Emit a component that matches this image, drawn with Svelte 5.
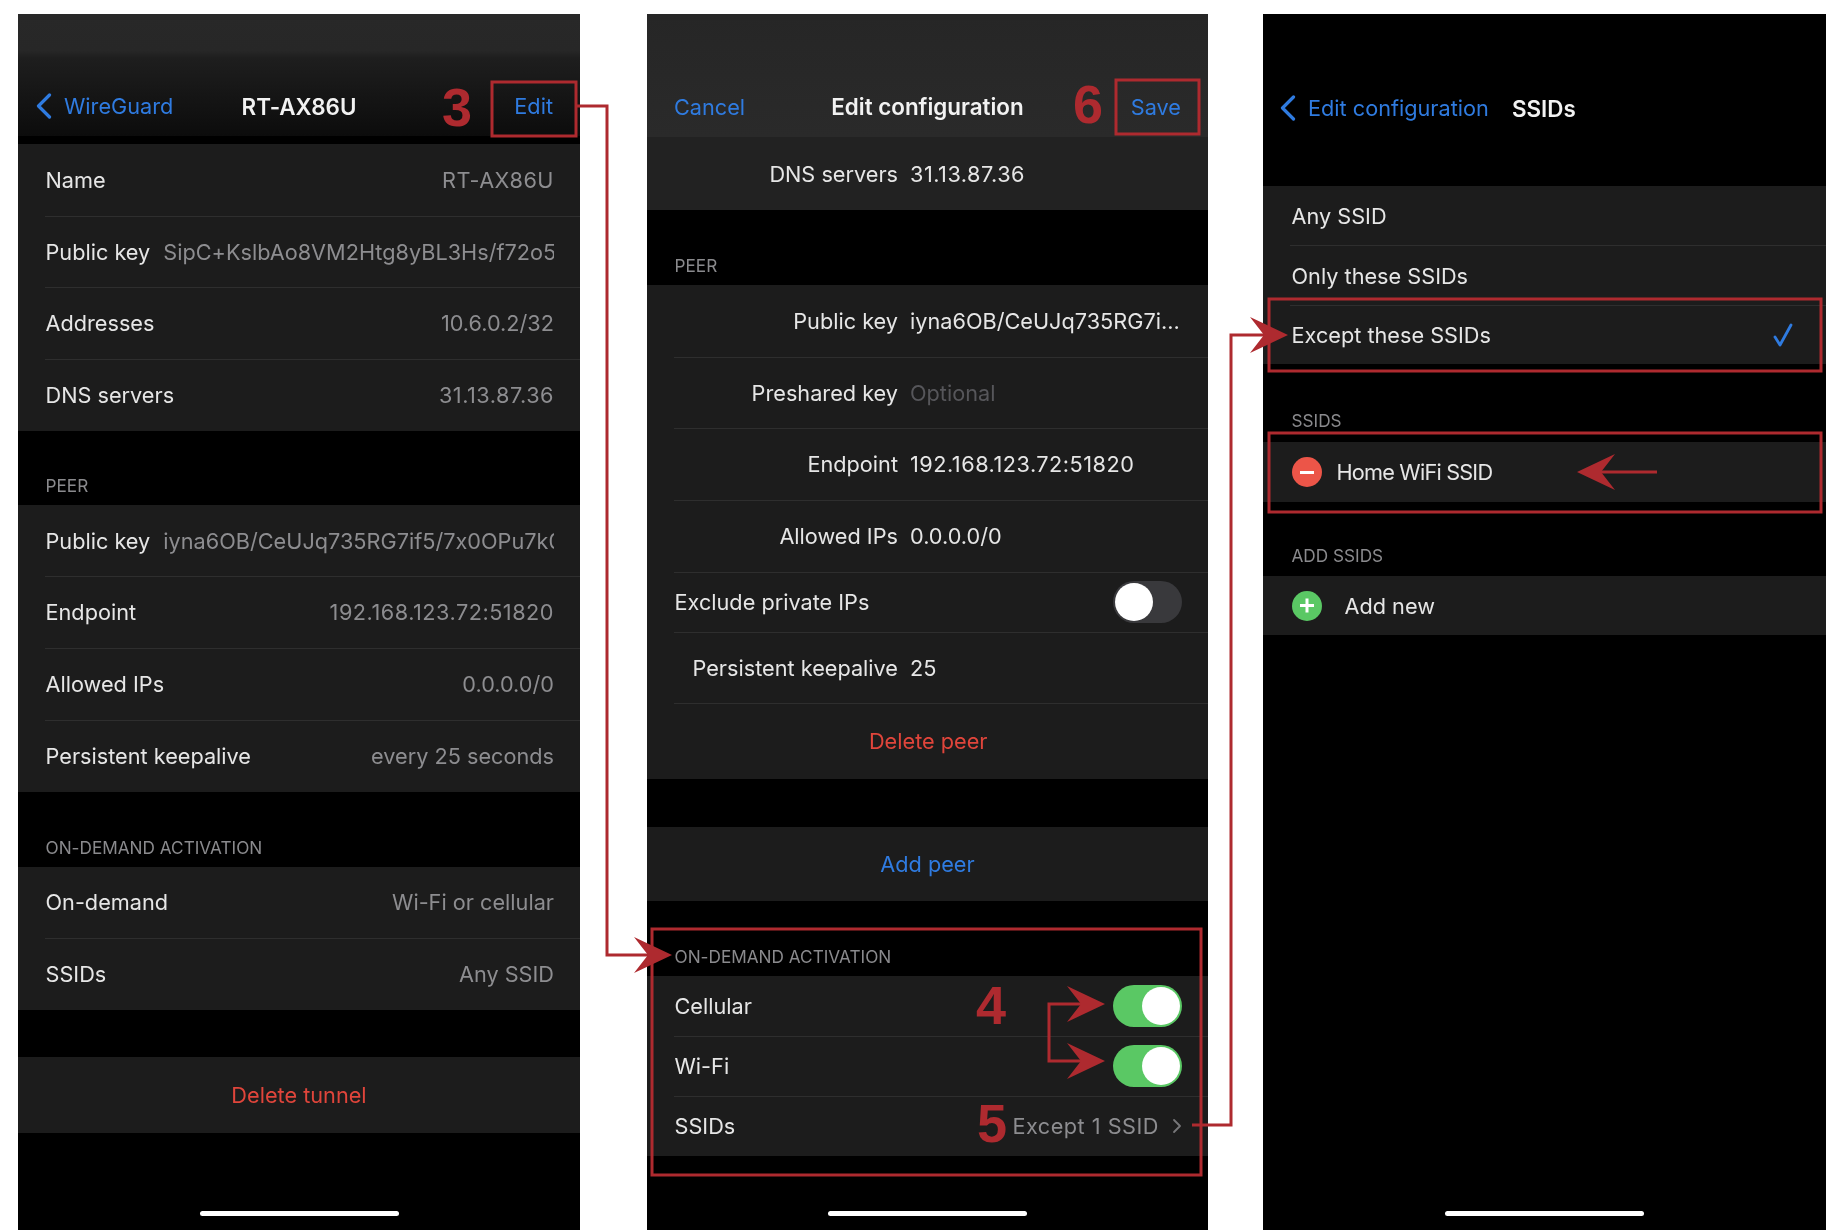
<script>
  const tunnelInterface = [
    { label: 'Name', value: 'RT-AX86U', num: true },
    { label: 'Public key', value: 'SipC+KslbAo8VM2Htg8yBL3Hs/f72o5', clip: true },
    { label: 'Addresses', value: '10.6.0.2/32' },
    { label: 'DNS servers', value: '31.13.87.36', num: true }
  ];
  const tunnelPeer = [
    { label: 'Public key', value: 'iyna6OB/CeUJq735RG7if5/7x0OPu7k0', clip: true },
    { label: 'Endpoint', value: '192.168.123.72:51820', num: true },
    { label: 'Allowed IPs', value: '0.0.0.0/0' },
    { label: 'Persistent keepalive', value: 'every 25 seconds' }
  ];
  const tunnelDemand = [
    { label: 'On-demand', value: 'Wi-Fi or cellular' },
    { label: 'SSIDs', value: 'Any SSID' }
  ];
  const editPeer = [
    { label: 'Public key', value: 'iyna6OB/CeUJq735RG7i...' },
    { label: 'Preshared key', value: 'Optional', muted: true },
    { label: 'Endpoint', value: '192.168.123.72:51820', num: true },
    { label: 'Allowed IPs', value: '0.0.0.0/0' }
  ];
</script>

{#snippet chevronLeft()}
  <svg class="chevron-left" viewBox="0 0 16 26" aria-hidden="true">
    <path d="M13.5 2 2.5 13l11 11" fill="none" stroke="currentColor" stroke-width="3.2" stroke-linecap="round" stroke-linejoin="round" />
  </svg>
{/snippet}

{#snippet toggle(on)}
  <span class="toggle" class:on><span class="knob"></span></span>
{/snippet}

{#snippet arrowHead(x, y, dir)}
  <path d="M{x} {y}L{x - dir * 38} {y - 18}L{x - dir * 24} {y}L{x - dir * 38} {y + 18}Z" class="head" />
{/snippet}

<div class="page">
  <section class="phone first">
    <header class="nav nav-dark">
      <span class="nav-left blue">{@render chevronLeft()}WireGuard</span>
      <span class="nav-title">RT-AX86U</span>
      <span class="nav-right blue">Edit</span>
    </header>

    <div class="group after-nav">
      {#each tunnelInterface as row}
        <div class="row">
          <span class="label">{row.label}</span>
          <span class="value" class:clip={row.clip} class:num={row.num}>{row.value}</span>
        </div>
      {/each}
    </div>

    <h3 class="section s1">Peer</h3>
    <div class="group">
      {#each tunnelPeer as row}
        <div class="row">
          <span class="label">{row.label}</span>
          <span class="value" class:clip={row.clip} class:num={row.num}>{row.value}</span>
        </div>
      {/each}
    </div>

    <h3 class="section s1b">On-demand activation</h3>
    <div class="group">
      {#each tunnelDemand as row}
        <div class="row">
          <span class="label">{row.label}</span>
          <span class="value">{row.value}</span>
        </div>
      {/each}
    </div>

    <div class="group action delete-tunnel">
      <span class="red">Delete tunnel</span>
    </div>

    <div class="home-bar"></div>
  </section>

  <section class="phone second">
    <header class="nav nav-gray">
      <span class="nav-left blue">Cancel</span>
      <span class="nav-title">Edit configuration</span>
      <span class="nav-right blue">Save</span>
    </header>

    <div class="group gray dns">
      <div class="row form">
        <span class="form-label">DNS servers</span>
        <span class="form-value num">31.13.87.36</span>
      </div>
    </div>

    <h3 class="section s2">Peer</h3>
    <div class="group">
      {#each editPeer as row}
        <div class="row form">
          <span class="form-label">{row.label}</span>
          <span class="form-value" class:muted={row.muted} class:num={row.num}>{row.value}</span>
        </div>
      {/each}
      <div class="row short">
        <span class="label">Exclude private IPs</span>
        {@render toggle(false)}
      </div>
      <div class="row form">
        <span class="form-label">Persistent keepalive</span>
        <span class="form-value">25</span>
      </div>
      <div class="row centered delete-peer"><span class="red">Delete peer</span></div>
    </div>

    <div class="group action add-peer">
      <span class="blue">Add peer</span>
    </div>

    <h3 class="section s3">On-demand activation</h3>
    <div class="group">
      <div class="row short">
        <span class="label">Cellular</span>
        {@render toggle(true)}
      </div>
      <div class="row short">
        <span class="label">Wi-Fi</span>
        {@render toggle(true)}
      </div>
      <div class="row short">
        <span class="label">SSIDs</span>
        <span class="value num">Except 1 SSID
          <svg class="chevron-right" viewBox="0 0 10 16" aria-hidden="true">
            <path d="M2 2l6 6-6 6" fill="none" stroke="currentColor" stroke-width="1.8" stroke-linecap="round" stroke-linejoin="round" />
          </svg>
        </span>
      </div>
    </div>

    <div class="home-bar"></div>
  </section>

  <section class="phone third">
    <header class="nav nav-black">
      <span class="nav-left blue">{@render chevronLeft()}Edit configuration</span>
      <span class="nav-title plain">SSIDs</span>
    </header>

    <div class="group">
      <div class="row short"><span class="label">Any SSID</span></div>
      <div class="row short"><span class="label">Only these SSIDs</span></div>
      <div class="row short">
        <span class="label">Except these SSIDs</span>
        <svg class="check" viewBox="0 0 20 24" aria-hidden="true">
          <path d="M2 14l5 8L18 2" fill="none" stroke="#2f7be0" stroke-width="2.8" stroke-linecap="round" stroke-linejoin="round" />
        </svg>
      </div>
    </div>

    <h3 class="section s4">SSIDs</h3>
    <div class="group">
      <div class="row short plain-row">
        <span class="badge minus"></span>
        <span class="label badge-text tight">Home WiFi SSID</span>
      </div>
    </div>

    <h3 class="section s5">Add SSIDs</h3>
    <div class="group">
      <div class="row short plain-row">
        <span class="badge plus"></span>
        <span class="label badge-text wide">Add new</span>
      </div>
    </div>

    <div class="home-bar"></div>
  </section>

  <!-- red callouts drawn over the three screens -->
  <svg class="callouts" viewBox="0 0 1826 1232" aria-hidden="true">
    <rect x="492" y="82" width="84" height="54" />
    <rect x="1116" y="80" width="83" height="54" />
    <rect x="652" y="929" width="549" height="246" />
    <rect x="1269" y="299" width="552" height="72" />
    <rect x="1269" y="433" width="552" height="79" />

    <path d="M576 106H607V955H650" />
    {@render arrowHead(672, 955, 1)}

    <path d="M1192 1125H1231V335H1268" />
    {@render arrowHead(1288, 335, 1)}

    <path d="M1657 472H1600" />
    {@render arrowHead(1577, 472, -1)}

    <path d="M1085 1004H1049V1061H1085" />
    {@render arrowHead(1105, 1004, 1)}
    {@render arrowHead(1105, 1061, 1)}
  </svg>

  <span class="step step-3">3</span>
  <span class="step step-6">6</span>
  <span class="step step-4">4</span>
  <span class="step step-5">5</span>
</div>

<style>
  :global(body) {
    margin: 0;
    background: #fff;
  }

  .page {
    position: relative;
    display: flex;
    width: 1826px;
    height: 1232px;
    padding: 14px 0 2px 18px;
    box-sizing: border-box;
    overflow: hidden;
    font-family: Inter, "Liberation Sans", sans-serif;
    font-size: 21.7px;
    font-feature-settings: "calt" 0;
    color: #e6e6e6;
    filter: blur(0.6px);
  }

  .phone {
    display: flex;
    flex-direction: column;
    flex: none;
    height: 1216px;
    background: #000;
  }

  .first {
    width: 562px;
  }

  .second {
    width: 561px;
    margin-left: 67px;
  }

  .third {
    width: 563px;
    margin-left: 55px;
  }

  .nav {
    display: grid;
    grid-template-columns: 1fr auto 1fr;
    align-items: center;
    box-sizing: border-box;
    height: 123px;
    padding: 62px 27px 0;
    flex: none;
  }

  .nav-dark {
    height: 122px;
    background: linear-gradient(#282828 0, #272727 30%, #1e1e1e 36%, #0c0c0c 100%);
  }

  .nav-gray {
    background: linear-gradient(#262626, #2a2a2a);
  }

  .nav-black {
    display: flex;
    height: 172px;
    padding: 16px 27px 0 17px;
    background: #000;
  }

  .nav-title {
    font-size: 22.4px;
    font-weight: 600;
    color: #f2f2f2;
    text-align: center;
  }

  .nav-title.plain {
    margin-left: 23px;
  }

  .nav-left {
    display: flex;
    align-items: center;
    gap: 12px;
    white-space: nowrap;
  }

  .first .nav-left {
    margin-left: -9px;
  }

  .nav-right {
    text-align: right;
  }

  .chevron-left {
    width: 16px;
    height: 26px;
  }

  .blue {
    color: #2f7be0;
  }

  .red {
    color: #e0453b;
  }

  .group {
    display: flex;
    flex-direction: column;
    flex: none;
    background: #1c1c1c;
  }

  .group.gray {
    background: #222;
  }

  .after-nav {
    margin-top: 8px;
  }

  .row {
    position: relative;
    display: flex;
    align-items: center;
    justify-content: space-between;
    gap: 13px;
    box-sizing: border-box;
    height: 71.7px;
    padding: 0 26px 0 27.5px;
    white-space: nowrap;
  }

  .row + .row::before {
    content: "";
    position: absolute;
    top: 0;
    left: 27px;
    right: 0;
    height: 1px;
    background: #2e2e2e;
  }

  .row.short {
    height: 60px;
  }

  .third .row.short {
    height: 59.4px;
    padding-left: 28.5px;
    padding-top: 1px;
  }

  .label {
    flex: none;
  }

  .value {
    display: flex;
    align-items: center;
    color: #8d8d90;
    min-width: 0;
  }

  .value.clip {
    flex: 1;
    overflow: hidden;
  }

  .form {
    justify-content: flex-start;
    gap: 12px;
  }

  .form-label {
    flex: none;
    width: 223.5px;
    text-align: right;
  }

  .form-value {
    flex: 1;
    min-width: 0;
  }

  .num {
    letter-spacing: 0.5px;
  }

  .muted {
    color: #56565a;
  }

  .centered {
    justify-content: center;
  }

  .delete-peer {
    height: 76px;
  }

  .dns .row {
    height: 73px;
  }

  .action {
    align-items: center;
    justify-content: center;
  }

  .delete-tunnel {
    height: 76px;
    margin-top: 47px;
  }

  .add-peer {
    height: 74px;
    margin-top: 48px;
  }

  .section {
    display: flex;
    align-items: flex-end;
    flex: none;
    box-sizing: border-box;
    margin: 0;
    padding: 0 27.5px 9px;
    font-size: 17.2px;
    font-weight: 400;
    line-height: 20px;
    text-transform: uppercase;
    color: #8a8a8d;
    background: #000;
  }

  .third .section {
    padding-left: 28.5px;
  }

  .s1 {
    height: 74px;
  }

  .s1b {
    height: 75px;
  }

  .s2 {
    height: 75px;
  }

  .s3 {
    height: 75px;
  }

  .third .s4 {
    height: 78px;
    padding-bottom: 11px;
  }

  .third .s5 {
    height: 74px;
    padding-bottom: 10px;
  }

  .toggle {
    position: relative;
    display: block;
    flex: none;
    width: 69px;
    height: 42px;
    border-radius: 21px;
    background: #39393c;
  }

  .toggle.on {
    background: #5ac864;
  }

  .knob {
    position: absolute;
    top: 2px;
    left: 2px;
    width: 38px;
    height: 38px;
    border-radius: 50%;
    background: #fff;
  }

  .toggle.on .knob {
    left: 29px;
  }

  .chevron-right {
    width: 10px;
    height: 16px;
    margin-left: 13px;
    color: #77777a;
  }

  .check {
    width: 20px;
    height: 24px;
    margin-right: 7px;
  }

  .plain-row {
    justify-content: flex-start;
  }

  .badge {
    position: relative;
    flex: none;
    width: 30px;
    height: 30px;
    border-radius: 50%;
  }

  .badge::before,
  .plus::after {
    content: "";
    position: absolute;
    top: 13.5px;
    left: 8px;
    width: 14px;
    height: 3px;
    background: #fff;
  }

  .plus::after {
    transform: rotate(90deg);
  }

  .minus {
    background: #ec5548;
  }

  .plus {
    background: #5ac864;
  }

  .badge-text {
    margin-left: 2px;
  }

  .badge-text.tight {
    letter-spacing: -0.8px;
  }

  .badge-text.wide {
    margin-left: 10px;
  }

  .home-bar {
    flex: none;
    align-self: center;
    width: 199px;
    height: 5px;
    margin: auto 0 14px;
    border-radius: 3px;
    background: #fff;
  }

  .callouts {
    position: absolute;
    inset: 0;
    width: 1826px;
    height: 1232px;
    pointer-events: none;
  }

  .callouts rect,
  .callouts path {
    fill: none;
    stroke: #ae2a2f;
    stroke-width: 3;
  }

  .callouts path.head {
    fill: #ae2a2f;
    stroke: none;
  }

  .step {
    position: absolute;
    font-family: "Liberation Sans", sans-serif;
    font-size: 54px;
    font-weight: 700;
    line-height: 54px;
    color: #ae2a2f;
  }

  .step-3 {
    left: 442px;
    top: 80px;
  }

  .step-6 {
    left: 1073px;
    top: 77px;
  }

  .step-4 {
    left: 976px;
    top: 978px;
  }

  .step-5 {
    left: 977px;
    top: 1096px;
  }
</style>
